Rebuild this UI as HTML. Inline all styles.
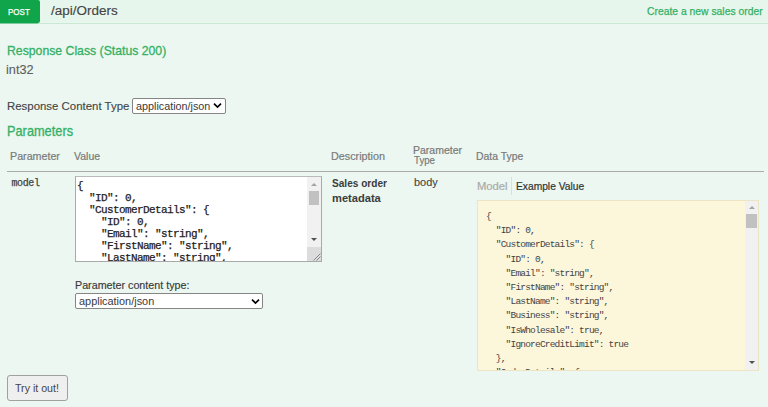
<!DOCTYPE html>
<html><head><meta charset="utf-8"><style>
html,body{margin:0;padding:0}
body{width:768px;height:407px;overflow:hidden;position:relative;background:#ebf7f0;font-family:"Liberation Sans",sans-serif}
.t{position:absolute;line-height:40px;white-space:pre;transform-origin:0 0}
.abs{position:absolute}
</style></head><body>
<div class="abs" style="left:0;top:0;width:768px;height:23px;background:#e7f6ec;border-bottom:1px solid #c8e8d4"></div>
<div class="abs" style="left:40px;top:0;width:1px;height:22px;background:#eaf7ee"></div>
<div class="abs" style="left:41px;top:22px;width:727px;height:1px;background:#eaf7ee"></div>
<div class="abs" style="left:0;top:0;width:39.5px;height:23px;background:#10a54a;border-radius:0 2px 2px 0"></div>
<div class="abs" style="left:0;top:23px;width:38px;height:1px;background:#7fcb9c"></div>
<div class="t" style="left:8.0px;top:-8.0px;font-family:'Liberation Sans',sans-serif;font-weight:normal;font-size:9.25px;color:#ffffff;transform:scaleX(0.865);-webkit-text-stroke:0.25px #ffffff;">POST</div>
<div class="t" style="left:50.75px;top:-9.0px;font-family:'Liberation Sans',sans-serif;font-weight:normal;font-size:13.25px;color:#444444;transform:scaleX(1.018);-webkit-text-stroke:0.15px #444444;">/api/Orders</div>
<div class="t" style="left:646.75px;top:-9.0px;font-family:'Liberation Sans',sans-serif;font-weight:normal;font-size:11.5px;color:#33b064;transform:scaleX(0.9);-webkit-text-stroke:0.25px #33b064;">Create a new sales order</div>
<div class="t" style="left:6.75px;top:30.5px;font-family:'Liberation Sans',sans-serif;font-weight:normal;font-size:13.5px;color:#33b064;transform:scaleX(0.907);-webkit-text-stroke:0.3px #33b064;">Response Class (Status 200)</div>
<div class="t" style="left:6.25px;top:49.5px;font-family:'Liberation Sans',sans-serif;font-weight:normal;font-size:12.0px;color:#606060;transform:scaleX(1.058);-webkit-text-stroke:0.1px #606060;">int32</div>
<div class="t" style="left:6.5px;top:85.5px;font-family:'Liberation Sans',sans-serif;font-weight:normal;font-size:11.75px;color:#444444;transform:scaleX(0.972);-webkit-text-stroke:0.12px #444444;">Response Content Type</div>
<div class="abs" style="left:132px;top:98px;width:92px;height:14px;background:#fff;border:1px solid #858585;border-radius:2px"></div>
<div class="t" style="left:135.5px;top:85.5px;font-family:'Liberation Sans',sans-serif;font-weight:normal;font-size:11px;color:#3a3a3a;transform:scaleX(0.98);">application/json</div>
<div class="abs" style="left:213px;top:102px"><svg style="display:block" width="9" height="7" viewBox="0 0 9 7"><path d="M1 1.6 L4.5 5 L8 1.6" fill="none" stroke="#000" stroke-width="1.7"/></svg></div>
<div class="t" style="left:7.0px;top:112.0px;font-family:'Liberation Sans',sans-serif;font-weight:normal;font-size:13.75px;color:#33b064;transform:scaleX(0.929);-webkit-text-stroke:0.3px #33b064;">Parameters</div>
<div class="t" style="left:10.25px;top:136.0px;font-family:'Liberation Sans',sans-serif;font-weight:normal;font-size:10.75px;color:#7a7a7a;transform:scaleX(0.995);-webkit-text-stroke:0.2px #7a7a7a;">Parameter</div><div class="t" style="left:74.0px;top:136.0px;font-family:'Liberation Sans',sans-serif;font-weight:normal;font-size:10.75px;color:#7a7a7a;transform:scaleX(0.977);-webkit-text-stroke:0.2px #7a7a7a;">Value</div><div class="t" style="left:330.5px;top:136.0px;font-family:'Liberation Sans',sans-serif;font-weight:normal;font-size:11.0px;color:#7a7a7a;transform:scaleX(0.98);-webkit-text-stroke:0.2px #7a7a7a;">Description</div><div class="t" style="left:412.75px;top:131.0px;font-family:'Liberation Sans',sans-serif;font-weight:normal;font-size:10.25px;color:#7a7a7a;transform:scaleX(1.026);-webkit-text-stroke:0.2px #7a7a7a;">Parameter</div><div class="t" style="left:413.75px;top:141.0px;font-family:'Liberation Sans',sans-serif;font-weight:normal;font-size:10.25px;color:#7a7a7a;transform:scaleX(0.945);-webkit-text-stroke:0.2px #7a7a7a;">Type</div><div class="t" style="left:476.0px;top:136.0px;font-family:'Liberation Sans',sans-serif;font-weight:normal;font-size:10.75px;color:#7a7a7a;transform:scaleX(0.968);-webkit-text-stroke:0.2px #7a7a7a;">Data Type</div>
<div class="abs" style="left:7px;top:171px;width:757px;height:1px;background:#ababab"></div>
<div class="t" style="left:11.5px;top:164px;font-family:'Liberation Mono',monospace;font-size:10px;letter-spacing:-0.4px;color:#444;-webkit-text-stroke:0.25px #444">model</div>
<!-- textarea -->
<div class="abs" style="left:75px;top:176px;width:245px;height:84px;background:#fff;border:1px solid #a9a9a9;border-top-color:#bababa;overflow:hidden">
  <pre style="margin:0;position:absolute;left:1px;top:3px;font-family:'Liberation Mono',monospace;font-size:11px;letter-spacing:-0.6px;line-height:12px;color:#222;-webkit-text-stroke:0.25px #222">{
  "ID": 0,
  "CustomerDetails": {
    "ID": 0,
    "Email": "string",
    "FirstName": "string",
    "LastName": "string",</pre>
  <div class="abs" style="left:231px;top:0;width:14px;height:84px;background:#f1f1f1"></div>
  <div class="abs" style="left:233px;top:14px;width:10px;height:14px;background:#c1c1c1"></div>
  <div class="abs" style="left:235px;top:6px;width:0;height:0;border-left:3px solid transparent;border-right:3px solid transparent;border-bottom:3px solid #a3a3a3"></div>
  <div class="abs" style="left:235px;top:61px;width:0;height:0;border-left:3px solid transparent;border-right:3px solid transparent;border-top:3px solid #505050"></div>
  <div class="abs" style="left:231px;top:70px;width:14px;height:14px;background:#dcdcdc"></div>
  <svg class="abs" style="left:231px;top:70px" width="14" height="14"><path d="M13.5 6.5 L6.5 13.5 M13.5 9.5 L9.5 13.5" stroke="#8a8a8a" stroke-width="1"/></svg>
</div>
<div class="t" style="left:332.25px;top:164.0px;font-family:'Liberation Sans',sans-serif;font-weight:bold;font-size:10.25px;color:#3c3c3c;transform:scaleX(0.984);">Sales order</div><div class="t" style="left:331.5px;top:179.0px;font-family:'Liberation Sans',sans-serif;font-weight:bold;font-size:10.25px;color:#3c3c3c;transform:scaleX(1.084);">metadata</div>
<div class="t" style="left:413.5px;top:161.5px;font-family:'Liberation Sans',sans-serif;font-weight:normal;font-size:10.5px;color:#444444;transform:scaleX(1.041);-webkit-text-stroke:0.1px #444444;">body</div>
<div class="t" style="left:476.75px;top:165.5px;font-family:'Liberation Sans',sans-serif;font-weight:normal;font-size:10.5px;color:#aaaaaa;transform:scaleX(1.07);-webkit-text-stroke:0.2px #aaaaaa;">Model</div>
<div class="abs" style="left:510.5px;top:177px;width:1px;height:18px;background:#dddddd"></div>
<div class="t" style="left:515.5px;top:165.5px;font-family:'Liberation Sans',sans-serif;font-weight:normal;font-size:10.5px;color:#333333;transform:scaleX(0.975);-webkit-text-stroke:0.2px #333333;">Example Value</div>
<!-- snippet -->
<div class="abs" style="left:477px;top:200px;width:280px;height:169px;background:#fcf6db;border:1px solid #ece4c4;overflow:hidden">
  <pre style="margin:0;position:absolute;left:8px;top:9px;font-family:'Liberation Mono',monospace;font-size:9.5px;letter-spacing:-0.8px;line-height:14.2px;color:#444">{
  "ID": 0,
  "CustomerDetails": {
    "ID": 0,
    "Email": "string",
    "FirstName": "string",
    "LastName": "string",
    "Business": "string",
    "IsWholesale": true,
    "IgnoreCreditLimit": true
  },
  "OrderDetails": {</pre>
  <div class="abs" style="left:267px;top:0;width:13px;height:169px;background:#f1f1f1"></div>
  <div class="abs" style="left:268px;top:13px;width:11px;height:14px;background:#c1c1c1"></div>
  <div class="abs" style="left:270.5px;top:5px;width:0;height:0;border-left:3px solid transparent;border-right:3px solid transparent;border-bottom:3px solid #a3a3a3"></div>
  <div class="abs" style="left:270.5px;top:160px;width:0;height:0;border-left:3px solid transparent;border-right:3px solid transparent;border-top:3px solid #505050"></div>
</div>
<div class="t" style="left:74.75px;top:266.0px;font-family:'Liberation Sans',sans-serif;font-weight:normal;font-size:10.0px;color:#3a3a3a;transform:scaleX(1.072);-webkit-text-stroke:0.15px #3a3a3a;">Parameter content type:</div>
<div class="abs" style="left:75px;top:293px;width:186px;height:14px;background:#fff;border:1px solid #858585;border-radius:2px"></div>
<div class="t" style="left:78.5px;top:281.0px;font-family:'Liberation Sans',sans-serif;font-weight:normal;font-size:11px;color:#3a3a3a;transform:scaleX(0.992);">application/json</div>
<div class="abs" style="left:250.5px;top:297.5px"><svg style="display:block" width="9" height="7" viewBox="0 0 9 7"><path d="M1 1.6 L4.5 5 L8 1.6" fill="none" stroke="#000" stroke-width="1.7"/></svg></div>
<div class="abs" style="left:7px;top:375px;width:59px;height:24px;background:#efefef;border:1px solid #a0a0a0;border-radius:3px"></div>
<div class="t" style="left:15.25px;top:368.0px;font-family:'Liberation Sans',sans-serif;font-weight:normal;font-size:11.75px;color:#444444;transform:scaleX(0.904);">Try it out!</div>
</body></html>
